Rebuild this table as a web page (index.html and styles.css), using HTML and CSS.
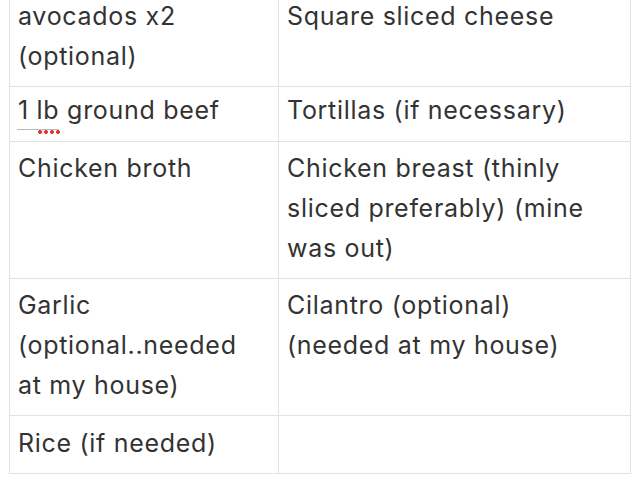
FILE: index.html
```html
<!DOCTYPE html>
<html>
<head>
<meta charset="utf-8">
<link rel="stylesheet" href="styles.css">
</head>
<body>
<table class="grid">
  <tr>
    <td class="c1">avocados x2 (optional)</td>
    <td class="c2">Square sliced cheese</td>
  </tr>
  <tr class="r2">
    <td class="c1"><span class="spell">1 <span class="typo">lb</span></span> ground beef</td>
    <td class="c2">Tortillas (if necessary)</td>
  </tr>
  <tr>
    <td class="c1">Chicken broth</td>
    <td class="c2">Chicken breast (thinly sliced preferably) (mine was out)</td>
  </tr>
  <tr>
    <td class="c1">Garlic (optional..needed at my house)</td>
    <td class="c2">Cilantro (optional) (needed at my house)</td>
  </tr>
  <tr class="r5">
    <td class="c1">Rice (if needed)</td>
    <td class="c2"></td>
  </tr>
</table>
</body>
</html>
```
FILE: styles.css
```css
html, body {
  margin: 0;
  padding: 0;
  background: #ffffff;
  overflow: hidden;
}
.grid {
  border-collapse: collapse;
  margin: -11px 0 0 9px;
  width: 622px;
  table-layout: fixed;
  font-family: Inter, "Liberation Sans", sans-serif;
  font-size: 25px;
  letter-spacing: 0.7px;
  line-height: 40px;
  color: #333333;
}
.grid td {
  border: 1px solid #e2e2e2;
  vertical-align: top;
  padding: 6px 8px 10px 8px;
}
.grid td.c1 { width: 246px; padding-right: 14px; }
.grid td.c2 { width: 319px; padding-right: 24px; }
.r2 td { padding-top: 3px; padding-bottom: 11px; }
.r5 td { padding-top: 7px; padding-bottom: 10px; }
.spell {
  position: relative;
}
.spell::after {
  content: "";
  position: absolute;
  left: -1px;
  right: 0;
  bottom: -5px;
  height: 1px;
  background: #b8b8b8;
}
.typo {
  position: relative;
}
.typo::after {
  content: "";
  position: absolute;
  left: 1px;
  bottom: -9px;
  width: 24px;
  height: 4px;
  background: radial-gradient(circle at 2px 2px, #e8353a 1.8px, transparent 2.2px) 0 0 / 6px 4px repeat-x;
}
```
